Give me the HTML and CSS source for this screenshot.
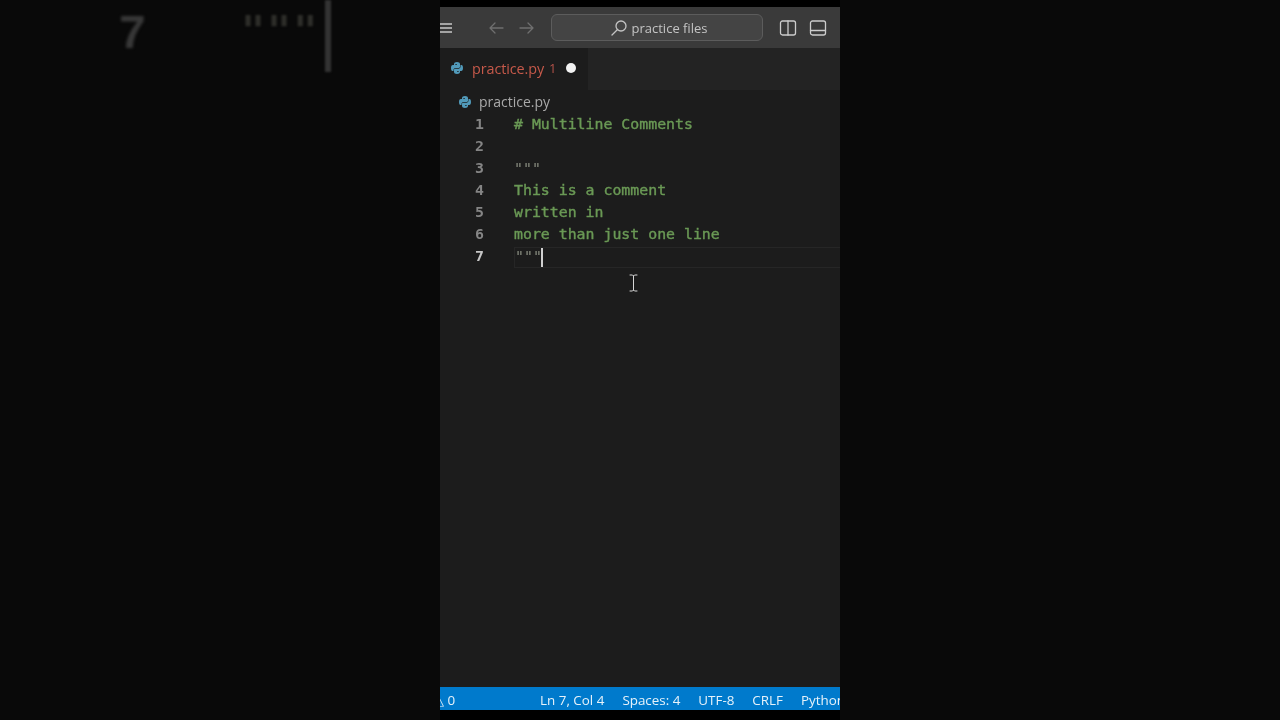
FILE: index.html
```html
<!DOCTYPE html>
<html lang="en">
<head>
<meta charset="utf-8">
<title>practice.py</title>
<link rel="stylesheet" href="styles.css">
</head>
<body>
<div class="side side-left">
  <div class="ghost-num">7</div>
  <div class="ghost-code"><span class="ghost-quotes">"""</span><span class="ghost-caret"></span></div>
</div>
<main class="phone">
  <header class="titlebar">
    <svg class="menu" viewBox="0 0 12 12" width="12" height="12"><path d="M0 2h12M0 6h12M0 10h12"/></svg>
    <div class="nav">
      <svg viewBox="0 0 16 16" width="16" height="16"><path d="M15 8H2M7 3 2 8l5 5"/></svg>
      <svg viewBox="0 0 16 16" width="16" height="16"><path d="M1 8h13M9 3l5 5-5 5"/></svg>
    </div>
    <div class="search">
      <svg viewBox="0 0 18 18" width="18" height="18"><circle cx="11" cy="7" r="5"/><path d="M7.300 10.700 2 16"/></svg>
      <span>practice files</span>
    </div>
    <div class="layout-icons">
      <svg viewBox="0 0 18 18" width="18" height="18"><rect x="1.500" y="2" width="15" height="14" rx="2"/><path d="M9 2v14"/></svg>
      <svg viewBox="0 0 18 18" width="18" height="18"><rect x="1.500" y="2" width="15" height="14" rx="2"/><path d="M1.500 11.500h15"/></svg>
    </div>
  </header>
  <nav class="tabs">
    <div class="tab">
      <svg class="py" viewBox="0 0 14 14" width="14" height="14"><path class="fill" d="M4 5.500V3c0-1.300 1.200-2 3-2s3 .7 3 2v2.800c0 .7-.5 1.200-1.200 1.200H5.500C4.300 7 3.500 7.700 3.500 9v1H2.600C1.500 10 1 8.700 1 7s.6-3 1.800-3H7V3.300H5.500z"/><path class="fill" d="M10 8.500V11c0 1.300-1.200 2-3 2s-3-.7-3-2V8.800C4 8.100 4.500 7.700 5.200 7.700h3.300c1.200 0 2-.8 2-2.200V4h.9C12.500 4 13 5.300 13 7s-.6 3-1.800 3H7v.7h1.500z"/></svg>
      <span class="tab-name">practice.py</span>
      <span class="tab-count">1</span>
      <span class="dirty"></span>
    </div>
  </nav>
  <div class="crumbs">
    <svg class="py" viewBox="0 0 14 14" width="14" height="14"><path class="fill" d="M4 5.500V3c0-1.300 1.200-2 3-2s3 .7 3 2v2.800c0 .7-.5 1.200-1.200 1.200H5.500C4.300 7 3.500 7.700 3.500 9v1H2.600C1.500 10 1 8.700 1 7s.6-3 1.800-3H7V3.300H5.500z"/><path class="fill" d="M10 8.500V11c0 1.300-1.200 2-3 2s-3-.7-3-2V8.800C4 8.100 4.500 7.700 5.200 7.700h3.300c1.200 0 2-.8 2-2.200V4h.9C12.500 4 13 5.300 13 7s-.6 3-1.800 3H7v.7h1.500z"/></svg>
    <span>practice.py</span>
  </div>
  <section class="editor">
    <div class="line"><span class="num">1</span><span class="code"># Multiline Comments</span></div>
    <div class="line"><span class="num">2</span><span class="code"></span></div>
    <div class="line"><span class="num">3</span><span class="code dim">"""</span></div>
    <div class="line"><span class="num">4</span><span class="code">This is a comment</span></div>
    <div class="line"><span class="num">5</span><span class="code">written in</span></div>
    <div class="line"><span class="num">6</span><span class="code">more than just one line</span></div>
    <div class="line current"><span class="num">7</span><span class="code dim">"""<span class="caret"></span></span></div>
    <svg class="ibeam" viewBox="0 0 9 18" width="9" height="18"><path d="M1 1h2.500l1 1 1-1H8M4.500 2v14M1 17h2.500l1-1 1 1H8"/></svg>
  </section>
  <footer class="status">
    <span class="status-left">&#9651; 0</span>
    <div class="status-right">
      <span>Ln 7, Col 4</span>
      <span>Spaces: 4</span>
      <span>UTF-8</span>
      <span>CRLF</span>
      <span>Python</span>
    </div>
  </footer>
</main>
<div class="side side-right"></div>
</body>
</html>
```
FILE: styles.css
```css
* { box-sizing: border-box; }
html, body { margin: 0; height: 100%; }
body {
  display: flex;
  width: 1280px;
  height: 720px;
  overflow: hidden;
  background: #090909;
  font-family: "Open Sans", "Noto Sans", sans-serif;
}
.side { width: 440px; flex: none; background: #090909; }
.side-left {
  display: flex;
  align-items: flex-start;
  padding: 4px 0 0 118px;
}
.ghost-num {
  width: 123px;
  padding-top: 3px;
  font: bold 48px/56px "Liberation Mono", monospace;
  color: #383838;
  filter: blur(1.500px);
}
.ghost-code {
  display: flex;
  height: 68px;
  margin-top: -4px;
  font: bold 40px/44px "DejaVu Sans Mono", monospace;
  color: #2e2e2a;
  filter: blur(1.300px);
}
.ghost-quotes { width: 84px; letter-spacing: 2px; padding-top: 9px; white-space: nowrap; }
.ghost-caret { width: 6px; height: 72px; background: #333333; }
.phone {
  width: 400px;
  height: 720px;
  padding: 7px 0 10px;
  background: #000;
  display: flex;
  flex-direction: column;
  overflow: hidden;
  flex: none;
  filter: blur(.3px);
}
svg { fill: none; stroke-linecap: round; stroke-linejoin: round; flex: none; }
.titlebar {
  height: 41px;
  flex: none;
  background: #3a3a3a;
  display: flex;
  align-items: center;
}
.menu { stroke: #c8c8c8; stroke-width: 1.600; stroke-linecap: butt; margin-right: 36px; margin-top: 1px; }
.nav { display: flex; gap: 15px; margin-right: 16px; }
.nav svg { stroke: #6f6f6f; stroke-width: 1.300; }
.search {
  width: 212px;
  height: 27px;
  border: 1px solid #5c5c5c;
  border-radius: 6px;
  background: #444444;
  display: flex;
  align-items: center;
  justify-content: center;
  gap: 4px;
  color: #c4c4c4;
  font-size: 13px;
  padding-left: 3px;
}
.search svg { stroke: #c4c4c4; stroke-width: 1.300; }
.layout-icons { display: flex; gap: 12px; margin-left: 16px; }
.layout-icons svg { stroke: #cccccc; stroke-width: 1.300; }
.tabs {
  height: 42px;
  flex: none;
  background: #232323;
  display: flex;
}
.tab {
  width: 148px;
  background: #1c1c1c;
  display: flex;
  align-items: center;
  padding-left: 10px;
  padding-bottom: 2px;
}
.fill { fill: #519aba; stroke: none; }
.tab-name { margin-left: 8px; font-size: 14.400px; color: #c6594a; letter-spacing: -.1px; }
.tab-count { margin-left: 5px; font-size: 13px; color: #b5534a; }
.dirty { width: 10px; height: 10px; border-radius: 50%; background: #f2f2f2; margin-left: 10px; }
.crumbs {
  height: 23px;
  flex: none;
  background: #1c1c1c;
  display: flex;
  align-items: center;
  gap: 7px;
  padding-left: 18px;
  color: #a9a9a9;
  font-size: 14px;
}
.editor { flex: 1 1 auto; background: #1c1c1c; position: relative; }
.line {
  height: 22px;
  display: flex;
  align-items: center;
  font: 14.870px/22px "DejaVu Sans Mono", monospace;
}
.num { width: 74px; padding-right: 30px; text-align: right; color: #858585; flex: none; font-weight: bold; }
.current .num { color: #c6c6c6; }
.code { color: #6a9955; white-space: pre; -webkit-text-stroke: .4px #6a9955; }
.code.dim { color: #85897c; -webkit-text-stroke: 0; }
.current .code {
  flex: 1;
  height: 21px;
  margin-top: 2px;
  display: flex;
  align-items: flex-start;
  border: 1px solid #262626;
  border-right: 0;
  line-height: 17px;
}
.caret { width: 2px; height: 19px; background: #d0d0d0; margin-left: -1px; }
.ibeam { position: absolute; left: 189px; top: 161px; stroke: #d6d6d6; stroke-width: 1; }
.status {
  height: 23px;
  flex: none;
  background: #007acc;
  color: #e6f2fa;
  font-size: 13.400px;
  display: flex;
  align-items: center;
  justify-content: space-between;
  white-space: nowrap;
  overflow: hidden;
  padding-top: 2px;
}
.status-left { margin-left: -6px; }
.status-right { display: flex; gap: 18px; margin-right: -5px; }
```
